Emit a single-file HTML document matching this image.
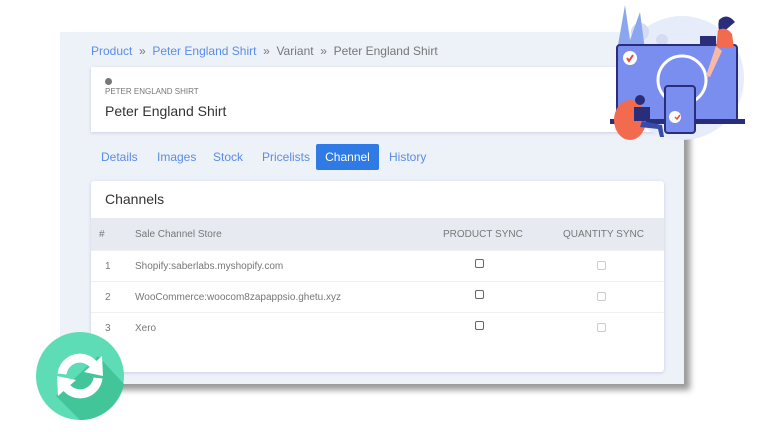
<!DOCTYPE html>
<html><head><style>
*{margin:0;padding:0;box-sizing:border-box}
body{width:768px;height:432px;background:#fff;position:relative;overflow:hidden;font-family:"Liberation Sans",sans-serif}
.panel{position:absolute;left:60px;top:32px;width:624px;height:352px;background:#edf1f8;box-shadow:6px 6px 6px #999}
.bc{position:absolute;left:91px;top:44px;font-size:12px;color:#777}
.bc a{color:#5b8de6}
.hdr{position:absolute;left:91px;top:67px;width:580px;height:65px;background:#fff;box-shadow:0 1px 3px #ccd}
.tabs{position:absolute;left:91px;top:144px;height:26px;font-size:12px}
.tab{position:absolute;top:0;height:26px;line-height:26px;color:#5b8de6}
.card{position:absolute;left:91px;top:181px;width:573px;height:191px;background:#fff;border-radius:3px;box-shadow:0 1px 3px #ccd}
.th{position:absolute;left:0;top:37px;width:573px;height:32px;background:#e7ebf1}
.t{position:absolute;font-size:10px;color:#777}
.cb{position:absolute;width:9px;height:9px;border:1px solid #666;border-radius:2px;background:#fff}
.cb.d{border-color:#ccc}
.row{position:absolute;left:0;width:573px;border-top:1px solid #eef0f4}
</style></head><body>
<div class="panel"></div>
<div class="bc"><a>Product</a> &nbsp;»&nbsp; <a>Peter England Shirt</a> &nbsp;»&nbsp; Variant &nbsp;»&nbsp; Peter England Shirt</div>
<div class="hdr">
<div style="position:absolute;left:14px;top:11px;width:7px;height:7px;border-radius:50%;background:#777"></div>
<div style="position:absolute;left:14px;top:20px;font-size:8px;color:#777">PETER ENGLAND SHIRT</div>
<div style="position:absolute;left:14px;top:36px;font-size:14px;color:#333">Peter England Shirt</div>
</div>
<div class="tabs">
<div class="tab" style="left:10px">Details</div>
<div class="tab" style="left:66px">Images</div>
<div class="tab" style="left:122px">Stock</div>
<div class="tab" style="left:171px">Pricelists</div>
<div class="tab" style="left:225px;width:63px;background:#2f7ae5;color:#fff;text-align:center;border-radius:2px">Channel</div>
<div class="tab" style="left:298px">History</div>
</div>
<div class="card">
<div style="position:absolute;left:14px;top:10px;font-size:14px;color:#333">Channels</div>
<div class="th"></div>
<div class="t" style="left:8px;top:48px">#</div>
<div class="t" style="left:44px;top:48px">Sale Channel Store</div>
<div class="t" style="left:352px;top:48px">PRODUCT SYNC</div>
<div class="t" style="left:472px;top:48px">QUANTITY SYNC</div>
<div class="row" style="top:69px"></div>
<div class="row" style="top:100px"></div>
<div class="row" style="top:131px"></div>
<div class="t" style="left:14px;top:80px">1</div><div class="t" style="left:44px;top:80px">Shopify:saberlabs.myshopify.com</div>
<div class="t" style="left:14px;top:111px">2</div><div class="t" style="left:44px;top:111px">WooCommerce:woocom8zapappsio.ghetu.xyz</div>
<div class="t" style="left:14px;top:142px">3</div><div class="t" style="left:44px;top:142px">Xero</div>
<div class="cb" style="left:384px;top:78px"></div><div class="cb d" style="left:506px;top:80px"></div>
<div class="cb" style="left:384px;top:109px"></div><div class="cb d" style="left:506px;top:111px"></div>
<div class="cb" style="left:384px;top:140px"></div><div class="cb d" style="left:506px;top:142px"></div>
</div>
<svg style="position:absolute;left:590px;top:0" width="178" height="150">
<circle cx="92" cy="78" r="62" fill="#e6ecfa"/>
<circle cx="50" cy="32" r="9" fill="#d5dcef"/><circle cx="72" cy="40" r="6" fill="#d5dcef"/>
<path d="M28 45 L35 5 L40 40 L50 12 L55 50 Z" fill="#8aa6ee"/>
<rect x="27" y="45" width="120" height="76" rx="3" fill="#7a8ef0" stroke="#2a2e7a" stroke-width="2"/>
<rect x="20" y="119" width="135" height="5" fill="#2a2e7a"/>
<circle cx="40" cy="58" r="7" fill="#fff"/><path d="M37 58 l2 3 l4 -6" stroke="#e44" stroke-width="2" fill="none"/>
<circle cx="92" cy="80" r="24" fill="none" stroke="#fff" stroke-width="3"/>
<rect x="75" y="86" width="30" height="47" rx="3" fill="#7a8ef0" stroke="#2a2e7a" stroke-width="2"/>
<circle cx="85" cy="117" r="6" fill="#fff"/>
<path d="M85 117 l2 2 l3 -4" stroke="#e44" stroke-width="1.5" fill="none"/>
<path d="M145 22 q-8 -10 -16 -2 q-2 8 2 14 z" fill="#2a2e7a"/>
<path d="M128 30 q8 -4 14 4 l2 14 h-18z" fill="#f26b4f"/>
<rect x="110" y="36" width="16" height="10" fill="#2a2e7a"/>
<path d="M126 46 l-10 30 l4 1 l12 -26z" fill="#f8b8a8"/>
<ellipse cx="40" cy="120" rx="16" ry="20" fill="#f26b4f"/>
<circle cx="50" cy="100" r="5" fill="#2a2e7a"/>
<rect x="44" y="107" width="16" height="14" fill="#2a2e7a"/>
<path d="M52 121 l20 4 l2 12 l-4 0 l-2 -8 l-18 -2z" fill="#3a4aa8"/>
</svg>
<svg style="position:absolute;left:36px;top:332px" width="100" height="100">
<circle cx="44" cy="44" r="44" fill="#5ddcb5"/>
<path d="M62 24 L88 52 A44 44 0 0 1 44 88 L20 64 Z" fill="#3dbf94" opacity=".8"/>
<path d="M26 42 A18 18 0 0 1 58 33" fill="none" stroke="#fff" stroke-width="9"/>
<path d="M66 24 L67 44 L48 40 Z" fill="#fff"/>
<path d="M62 46 A18 18 0 0 1 30 55" fill="none" stroke="#fff" stroke-width="9"/>
<path d="M22 64 L21 44 L40 48 Z" fill="#fff"/>
</svg>
</body></html>
